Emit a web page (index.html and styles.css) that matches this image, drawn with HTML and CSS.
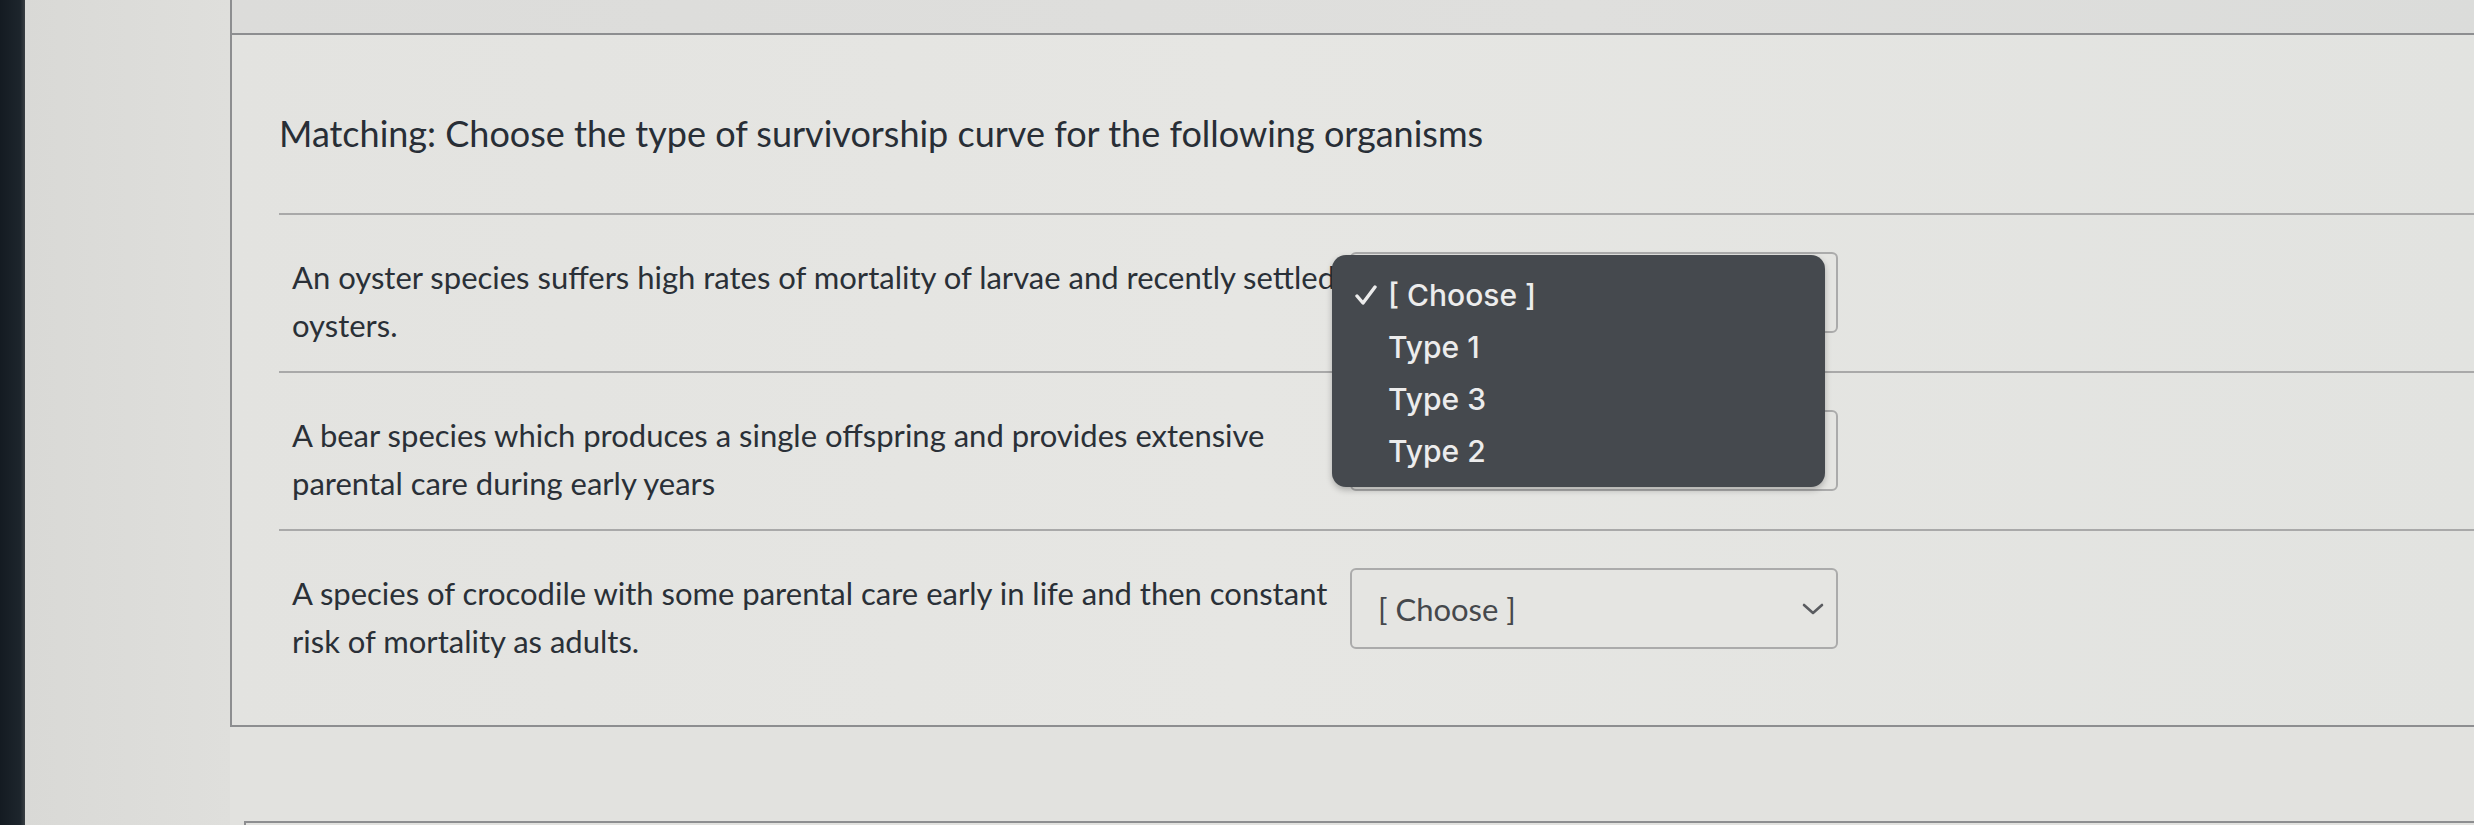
FILE: index.html
```html
<!DOCTYPE html>
<html lang="en">
<head>
<meta charset="utf-8">
<title>Matching question</title>
<link rel="stylesheet" href="styles.css">
</head>
<body>
<div class="screen">
  <div class="bezel"></div>
  <div class="gutter"></div>
  <div class="content">
    <div class="prev-box"></div>
    <div class="question">
      <h2 class="title">Matching: Choose the type of survivorship curve for the following organisms</h2>
      <div class="row">
        <div class="prompt">An oyster species suffers high rates of mortality of larvae and recently settled oysters.</div>
        <div class="select">
          <span class="select-value">[ Choose ]</span>
          <svg class="chevron" viewBox="0 0 22 12" aria-hidden="true"><path d="M2 2 L11 10 L20 2" fill="none" stroke="#5a5c60" stroke-width="2.6" stroke-linecap="round" stroke-linejoin="round"/></svg>
          <div class="menu">
            <div class="menu-item selected"><svg class="check" viewBox="0 0 22 22" aria-hidden="true"><path d="M2 12 L8 19 L20 3" fill="none" stroke="#ececec" stroke-width="3.4" stroke-linecap="round" stroke-linejoin="round"/></svg>[ Choose ]</div>
            <div class="menu-item">Type 1</div>
            <div class="menu-item">Type 3</div>
            <div class="menu-item">Type 2</div>
          </div>
        </div>
      </div>
      <div class="row">
        <div class="prompt">A bear species which produces a single offspring and provides extensive parental care during early years</div>
        <div class="select">
          <span class="select-value">[ Choose ]</span>
          <svg class="chevron" viewBox="0 0 22 12" aria-hidden="true"><path d="M2 2 L11 10 L20 2" fill="none" stroke="#5a5c60" stroke-width="2.6" stroke-linecap="round" stroke-linejoin="round"/></svg>
        </div>
      </div>
      <div class="row">
        <div class="prompt">A species of crocodile with some parental care early in life and then constant risk of mortality as adults.</div>
        <div class="select">
          <span class="select-value">[ Choose ]</span>
          <svg class="chevron" viewBox="0 0 22 12" aria-hidden="true"><path d="M2 2 L11 10 L20 2" fill="none" stroke="#5a5c60" stroke-width="2.6" stroke-linecap="round" stroke-linejoin="round"/></svg>
        </div>
      </div>
    </div>
    <div class="next-box"></div>
  </div>
</div>
</body>
</html>
```
FILE: styles.css
```css
html, body {
  margin: 0;
  padding: 0;
  width: 2474px;
  height: 825px;
  overflow: hidden;
  background: #dedddb;
}

.screen {
  display: flex;
  width: 2474px;
  height: 825px;
  font-family: Lato, "Open Sans", sans-serif;
  color: #2e343c;
}

.bezel {
  width: 25px;
  flex: none;
  background: linear-gradient(90deg, #141b22 0%, #1d252c 80%, #3a3f44 100%);
}

.gutter {
  width: 205px;
  flex: none;
  background: linear-gradient(90deg, #d9d9d6 0%, #dfdfdc 100%);
}

.content {
  flex: 1;
  display: flex;
  flex-direction: column;
  background: #e2e2df;
}

.prev-box {
  height: 33px;
  border-left: 2px solid #8d8e90;
  border-bottom: 2px solid #8d8e90;
  background: linear-gradient(90deg, #dcdcda 0%, #dfdfdd 60%, #dbdcda 100%);
}

.question {
  border-left: 2px solid #8d8e90;
  border-bottom: 2px solid #8d8e90;
  padding: 0 0 38px 47px;
  background: linear-gradient(90deg, #e3e3e0 0%, #e6e6e3 45%, #e2e3e0 100%);
}

.title {
  margin: 0;
  padding: 78px 0 60px;
  height: 40px;
  line-height: 40px;
  font-size: 36px;
  font-weight: 400;
  color: #282e36;
}

.row {
  display: flex;
  align-items: flex-start;
  border-top: 2px solid #a9a9a9;
  padding: 38px 0 22px 13px;
}

.prompt {
  width: 1058px;
  flex: none;
  font-size: 31px;
  line-height: 48px;
  color: #2a3037;
}

.select {
  position: relative;
  flex: none;
  box-sizing: border-box;
  width: 488px;
  height: 81px;
  margin-top: -1px;
  display: flex;
  align-items: center;
  justify-content: space-between;
  padding: 0 12px 0 26px;
  border: 2px solid #ababab;
  border-radius: 6px;
  background: #e5e5e2;
}

.select-value {
  font-size: 31px;
  color: #45484c;
}

.chevron {
  width: 22px;
  height: 12px;
}

.menu {
  position: absolute;
  left: -20px;
  top: 1px;
  box-sizing: border-box;
  width: 493px;
  height: 232px;
  padding: 14px 0 10px 56px;
  border-radius: 14px;
  background: #45494e;
  box-shadow: 0 3px 6px rgba(0, 0, 0, 0.25);
  font-family: Inter, "Liberation Sans", sans-serif;
  font-size: 30px;
  font-weight: 500;
  color: #ececec;
  z-index: 2;
}

.menu-item {
  position: relative;
  height: 52px;
  line-height: 52px;
}

.check {
  position: absolute;
  left: -33px;
  top: 15px;
  width: 22px;
  height: 22px;
}

.next-box {
  margin-top: 94px;
  border-left: 2px solid #8d8e90;
  border-top: 2px solid #8d8e90;
  margin-left: 14px;
  flex: 1;
}
```
